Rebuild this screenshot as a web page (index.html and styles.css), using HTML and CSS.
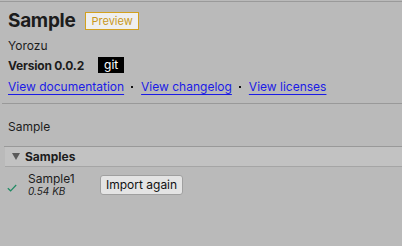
FILE: index.html
```html
<!DOCTYPE html>
<html>
<head>
<meta charset="utf-8">
<link rel="stylesheet" href="styles.css">
</head>
<body>
<div class="page">
  <div class="top">
    <div class="title-row">
      <span class="title">Sample</span>
      <span class="preview">Preview</span>
    </div>
    <div class="author">Yorozu</div>
    <div class="version-row">
      <span class="version">Version 0.0.2</span>
      <span class="git">git</span>
    </div>
    <div class="links">
      <a class="link" href="#">View documentation</a>
      <span class="dot"></span>
      <a class="link" href="#">View changelog</a>
      <span class="dot"></span>
      <a class="link" href="#">View licenses</a>
    </div>
  </div>
  <div class="desc">Sample</div>
  <div class="samples">
    <div class="samples-head">
      <span class="tri"></span>
      <span class="samples-title">Samples</span>
    </div>
    <div class="sample-row">
      <svg class="check" width="10" height="8" viewBox="0 0 10 8"><path d="M0.8 4.2 L3.6 6.8 L9.2 1" fill="none" stroke="#1f8a63" stroke-width="1.2"/></svg>
      <div class="sample-info">
        <div class="sample-name">Sample1</div>
        <div class="sample-size">0.54 KB</div>
      </div>
      <button class="btn">Import again</button>
    </div>
  </div>
</div>
</body>
</html>
```
FILE: styles.css
```css
html, body {
  margin: 0;
  padding: 0;
}
body {
  width: 402px;
  height: 246px;
  background: #bababa;
  font-family: Inter, "Noto Sans", sans-serif;
  color: #1c1c1c;
  overflow: hidden;
}
.page {
  border-top: 1px solid #9a9a9a;
  margin-top: 1px;
}
.top {
  padding: 0 0 8px 6px;
  border-bottom: 1px solid #999999;
  margin: 0 0 0 2px;
}
.title-row {
  display: flex;
  align-items: center;
  height: 31px;
  padding-top: 3px;
}
.title {
  font-size: 19px;
  font-weight: 700;
  letter-spacing: -0.3px;
}
.preview {
  margin-left: 10px;
  border: 1px solid #d3a11e;
  background: #efefef;
  color: #c8991c;
  font-size: 11px;
  padding: 0 5px;
  height: 16px;
  line-height: 16px;
}
.author {
  font-size: 12px;
  margin-top: 1px;
  height: 18px;
  line-height: 18px;
}
.version-row {
  display: flex;
  align-items: center;
  height: 20px;
  margin-top: 0;
}
.version {
  font-size: 12px;
  font-weight: 700;
  letter-spacing: -0.2px;
}
.git {
  margin-left: 14px;
  background: #000;
  color: #fff;
  font-size: 12px;
  height: 16px;
  line-height: 15px;
  padding: 0 6px;
}
.links {
  display: flex;
  align-items: center;
  font-size: 12px;
  height: 18px;
  margin-top: 2px;
}
.link {
  color: #1b1be6;
  text-decoration: underline;
  text-underline-offset: 3px;
}
.dot {
  width: 2px;
  height: 2px;
  background: #111;
  margin: 2px 8px 0 7px;
}
.desc {
  font-size: 12px;
  padding: 15px 0 0 4px;
  height: 27px;
  border-bottom: 1px solid #999999;
  margin: 0 0 0 4px;
}
.samples {
  margin-left: 5px;
}
.samples-head {
  display: flex;
  align-items: center;
  height: 19px;
  background: #c2c2c2;
  border-bottom: 1px solid #a5a5a5;
}
.tri {
  width: 0;
  height: 0;
  border-left: 4px solid transparent;
  border-right: 4px solid transparent;
  border-top: 7px solid #5a5a5a;
  margin-left: 7px;
}
.samples-title {
  font-size: 12px;
  font-weight: 700;
  margin-left: 5px;
}
.sample-row {
  display: flex;
  align-items: center;
  padding-top: 5px;
}
.check {
  margin-left: 2px;
  margin-top: 6px;
}
.sample-info {
  margin-left: 11px;
  width: 72px;
}
.sample-name {
  font-size: 12px;
  line-height: 13px;
}
.sample-size {
  font-size: 10px;
  font-style: italic;
  line-height: 12px;
}
.btn {
  font-family: Inter, "Noto Sans", sans-serif;
  font-size: 12px;
  color: #111;
  background: #e4e4e4;
  border: 1px solid #a0a0a0;
  border-radius: 3px;
  height: 20px;
  padding: 0 5px;
  margin-left: 0;
}
```
